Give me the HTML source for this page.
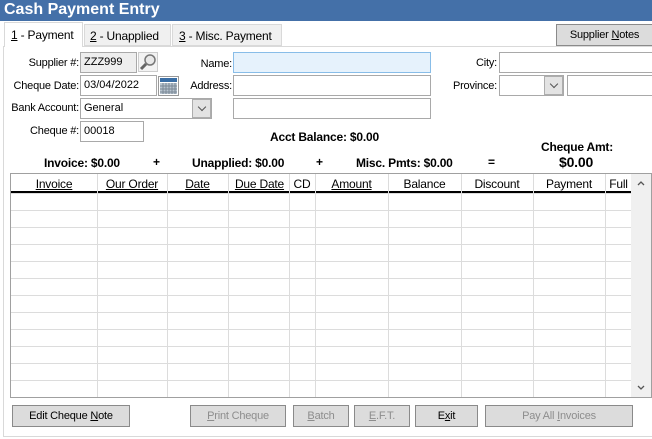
<!DOCTYPE html>
<html><head><style>
*{box-sizing:border-box;margin:0;padding:0}
body{width:652px;height:439px;background:#fff;font-family:"Liberation Sans",Arial,sans-serif;font-size:11px;color:#000;position:relative;overflow:hidden;white-space:nowrap}
.a{position:absolute}
.lbl{position:absolute;text-align:right;font-size:11px;letter-spacing:-0.2px}
.in{position:absolute;border:1px solid #a9a9a9;background:#fff;height:21px;padding:3px 3px;font-size:11px}
.btn{position:absolute;background:#dcdcdc;border:1px solid #8a8a8a;height:22px;text-align:center;line-height:20px;font-size:11px;letter-spacing:-0.2px}
.dis{color:#8d8d8d}
.b{font-weight:bold;font-size:12px;position:absolute;letter-spacing:-0.2px}
.dd{position:absolute;width:19px;height:19px;background:#e3e3e3;border:1px solid #adadad;top:0px;right:0px}
.dd:after{content:"";position:absolute;left:6px;top:4px;width:5px;height:5px;border-right:1px solid #555;border-bottom:1px solid #555;transform:rotate(45deg)}
.col{position:absolute;top:0;height:223px;border-left:1px solid #dcdcdc}
.h{position:absolute;top:3px;font-size:12px;text-align:center;letter-spacing:-0.2px}
.u{text-decoration:underline}
.tab{position:absolute;font-size:12px;letter-spacing:-0.2px;white-space:nowrap}
</style></head><body>
<div class="a" style="left:0;top:0;width:652px;height:21px;background:#4470a8;color:#fff;font-weight:bold;font-size:16px;padding:1px 4px">Cash Payment Entry</div>
<div class="a" style="left:3px;top:46px;width:649px;height:391px;border:1px solid #d9d9d9;border-right:none"></div>
<div class="tab" style="left:4px;top:22px;width:79px;height:25px;background:#fff;border:1px solid #d9d9d9;border-bottom:none;padding:5px 6px"><span class="u">1</span> - Payment</div>
<div class="tab" style="left:84px;top:24px;width:87px;height:22px;background:#f0f0f0;border:1px solid #d9d9d9;padding:4px 5px"><span class="u">2</span> - Unapplied</div>
<div class="tab" style="left:172px;top:24px;width:110px;height:22px;background:#f0f0f0;border:1px solid #d9d9d9;padding:4px 6px"><span class="u">3</span> - Misc. Payment</div>
<div class="btn" style="left:556px;top:24px;width:96px;height:22px;border-right:none">Supplier <span class="u">N</span>otes</div>

<div class="lbl" style="left:0;top:57px;width:79px">Supplier #:</div>
<div class="in" style="left:80px;top:52px;width:57px;background:#eeeeee">ZZZ999</div>
<svg class="a" style="left:138px;top:52px" width="20" height="20"><rect x="0.5" y="0.5" width="19" height="19" fill="#f3f3f3" stroke="#ccc"/><circle cx="12" cy="8" r="5" fill="#e8e8e8" stroke="#777" stroke-width="1.5"/><line x1="8" y1="12" x2="3" y2="17" stroke="#666" stroke-width="3"/></svg>
<div class="lbl" style="left:0;top:80px;width:79px">Cheque Date:</div>
<div class="in" style="left:80px;top:75px;width:77px">03/04/2022</div>
<svg class="a" style="left:158px;top:76px" width="21" height="20"><rect x="0.5" y="0.5" width="20" height="19" fill="#fff" stroke="#999"/><rect x="2" y="2" width="17" height="4" fill="#3a6ea5"/><rect x="2" y="7" width="17" height="11" fill="#b8c4cf"/><path d="M5 7v11M8 7v11M11 7v11M14 7v11M17 7v11M2 10h17M2 13h17M2 16h17" stroke="#7a8896" stroke-width="1"/></svg>
<div class="lbl" style="left:0;top:102px;width:79px">Bank Account:</div>
<div class="in" style="left:80px;top:98px;width:132px">General<div class="dd"></div></div>
<div class="lbl" style="left:0;top:125px;width:79px">Cheque #:</div>
<div class="in" style="left:80px;top:121px;width:64px">00018</div>

<div class="lbl" style="left:180px;top:58px;width:52px">Name:</div>
<div class="in" style="left:233px;top:52px;width:198px;background:#e6f2fc;border-color:#88bde8"></div>
<div class="lbl" style="left:180px;top:80px;width:52px">Address:</div>
<div class="in" style="left:233px;top:75px;width:198px"></div>
<div class="in" style="left:233px;top:98px;width:198px"></div>
<div class="lbl" style="left:440px;top:57px;width:57px">City:</div>
<div class="in" style="left:499px;top:52px;width:153px;border-right:none"></div>
<div class="lbl" style="left:440px;top:80px;width:57px">Province:</div>
<div class="in" style="left:499px;top:75px;width:65px"><div class="dd"></div></div>
<div class="in" style="left:567px;top:75px;width:85px;border-right:none"></div>

<div class="b" style="left:270px;top:130px">Acct Balance: $0.00</div>
<div class="b" style="left:541px;top:140px;font-size:12px">Cheque Amt:</div>
<div class="b" style="left:559px;top:154px;font-size:14px">$0.00</div>
<div class="b" style="left:44px;top:156px">Invoice: $0.00</div>
<div class="b" style="left:153px;top:155px">+</div>
<div class="b" style="left:192px;top:156px">Unapplied: $0.00</div>
<div class="b" style="left:316px;top:155px">+</div>
<div class="b" style="left:356px;top:156px">Misc. Pmts: $0.00</div>
<div class="b" style="left:488px;top:155px">=</div>

<div class="a" style="left:10px;top:173px;width:642px;height:225px;border:1px solid #a0a0a0;background:#fff;overflow:hidden">
 <div class="a" style="left:0;top:0;width:621px;height:223px;background:repeating-linear-gradient(to bottom,transparent 0,transparent 16px,#dcdcdc 16px,#dcdcdc 17px);background-position:0 3px"></div>
 <div class="a" style="left:0;top:0;width:621px;height:19px;background:#fff;border-bottom:2px solid #000"></div>
 <div class="col" style="left:86px"></div><div class="col" style="left:156px"></div><div class="col" style="left:217px"></div><div class="col" style="left:278px"></div><div class="col" style="left:304px"></div><div class="col" style="left:377px"></div><div class="col" style="left:450px"></div><div class="col" style="left:522px"></div><div class="col" style="left:594px"></div>
 <div class="h u" style="left:0;width:86px">Invoice</div>
 <div class="h u" style="left:86px;width:70px">Our Order</div>
 <div class="h u" style="left:156px;width:61px">Date</div>
 <div class="h u" style="left:219px;width:59px">Due Date</div>
 <div class="h" style="left:278px;width:26px">CD</div>
 <div class="h u" style="left:304px;width:73px">Amount</div>
 <div class="h" style="left:377px;width:73px">Balance</div>
 <div class="h" style="left:450px;width:72px">Discount</div>
 <div class="h" style="left:522px;width:72px">Payment</div>
 <div class="h" style="left:594px;width:27px">Full</div>
 <div class="a" style="left:620px;top:0;width:20px;height:223px;background:#f0f0f0"></div>
 <svg class="a" style="left:620px;top:0" width="20" height="223"><path d="M7 11l3-3 3 3" fill="none" stroke="#555" stroke-width="1.3"/><path d="M7 212l3 3 3-3" fill="none" stroke="#555" stroke-width="1.3"/></svg>
</div>

<div class="btn" style="left:12px;top:405px;width:118px">Edit Cheque <span class="u">N</span>ote</div>
<div class="btn dis" style="left:190px;top:405px;width:96px"><span class="u">P</span>rint Cheque</div>
<div class="btn dis" style="left:293px;top:405px;width:56px"><span class="u">B</span>atch</div>
<div class="btn dis" style="left:354px;top:405px;width:56px"><span class="u">E</span>.F.T.</div>
<div class="btn" style="left:415px;top:405px;width:63px">E<span class="u">x</span>it</div>
<div class="btn dis" style="left:485px;top:405px;width:148px">Pay All <span class="u">I</span>nvoices</div>
</body></html>
